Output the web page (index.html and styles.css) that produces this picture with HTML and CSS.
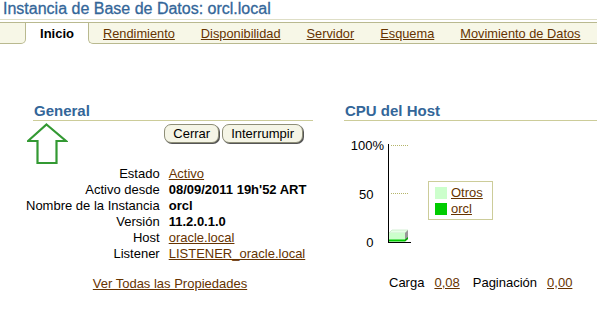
FILE: index.html
```html
<html>
  <head>
    <meta charset="utf-8">
    <title>Instancia de Base de Datos: orcl.local</title>
    <link rel="stylesheet" href="styles.css">
  </head>

  <body>

    <h1 class="page-title">Instancia de Base de Datos: orcl.local</h1>

    <div class="tabbar">
      <div class="tabrow">
        <div class="tab-start"></div>
        <div class="tab active">Inicio</div>
        <div class="tab-rest">
          <a class="tab" href="#">Rendimiento</a>
          <a class="tab" href="#">Disponibilidad</a>
          <a class="tab" href="#">Servidor</a>
          <a class="tab" href="#">Esquema</a>
          <a class="tab" href="#">Movimiento de Datos</a>
        </div>
      </div>
    </div>

    <div class="content">

      <div class="col-general">
        <h2 class="section-title">General</h2>

        <div class="buttons">
          <button class="btn">Cerrar</button>
          <button class="btn">Interrumpir</button>
        </div>

        <!-- green arrow pointing at the section title -->
        <svg class="hint-arrow" width="41" height="42" viewBox="0 0 41 42">
          <path d="M19.5 1.5 L39 18 L29.5 18 L29.5 40 L10.5 40 L10.5 18 L1 18 Z" fill="none" stroke="#339933" stroke-width="2.2"/>
        </svg>

        <div class="props">
          <span class="lbl">Estado</span><span class="val"><a href="#">Activo</a></span>
          <span class="lbl">Activo desde</span><span class="val bold">08/09/2011 19h'52 ART</span>
          <span class="lbl">Nombre de la Instancia</span><span class="val bold">orcl</span>
          <span class="lbl">Versión</span><span class="val bold">11.2.0.1.0</span>
          <span class="lbl">Host</span><span class="val"><a href="#">oracle.local</a></span>
          <span class="lbl">Listener</span><span class="val"><a href="#">LISTENER_oracle.local</a></span>
        </div>

        <div class="all-props"><a href="#">Ver Todas las Propiedades</a></div>
      </div>

      <div class="col-cpu">
        <h2 class="section-title">CPU del Host</h2>

        <div class="chart-row">
          <svg class="chart" width="76" height="115" viewBox="0 0 76 115">
            <text x="40" y="15" text-anchor="end">100%</text>
            <text x="29.5" y="63.5" text-anchor="end">50</text>
            <text x="29.5" y="112" text-anchor="end">0</text>
            <line x1="47" y1="10.5" x2="64" y2="10.5" stroke="#b5b56a" stroke-dasharray="1 1"/>
            <line x1="47" y1="58.5" x2="64" y2="58.5" stroke="#b5b56a" stroke-dasharray="1 1"/>
            <!-- bar -->
            <polygon points="45,98 48,95 64,95 61,98" fill="#e8ffe8" stroke="#b8e6b8" stroke-width="0.6"/>
            <rect x="45" y="98" width="16" height="8" fill="#ccffcc"/>
            <rect x="45" y="104.5" width="16" height="2" fill="#00cc00"/>
            <polygon points="61,98 64,95 64,104 61,106.5" fill="#999999"/>
            <polygon points="61,104.5 64,102 64,104 61,106.5" fill="#00aa00"/>
            <line x1="44.5" y1="9" x2="44.5" y2="107.5" stroke="#000"/>
            <line x1="44" y1="107.5" x2="67" y2="107.5" stroke="#000"/>
          </svg>

          <div class="legend">
            <div class="legend-item"><span class="swatch otros"></span><a href="#">Otros</a></div>
            <div class="legend-item"><span class="swatch orcl"></span><a href="#">orcl</a></div>
          </div>
        </div>

        <div class="stats">
          <span>Carga</span><a href="#">0,08</a>
          <span class="gap">Paginación</span><a href="#">0,00</a>
        </div>
      </div>

    </div>

  </body>
</html>
```

FILE: styles.css
```css
body {
  margin: 0;
  font-family: "Liberation Sans", Arial, sans-serif;
  font-size: 13px;
  color: #000;
  background: #fff;
  overflow: hidden;
}

a {
  color: #663300;
}

.page-title {
  margin: 0;
  padding-left: 3px;
  font-size: 16px;
  line-height: 18px;
  font-weight: normal;
  color: #336699;
  -webkit-text-stroke: 0.3px #336699;
}

/* tabs */

.tabbar {
  margin-top: 1px;
  border-top: 1px solid #dedec6;
  padding-top: 2px;
}

.tabrow {
  display: flex;
  height: 22px;
  white-space: nowrap;
}

.tab-start {
  width: 25px;
  background: #f7f7e7;
  border-top: 1px solid #b9b98f;
  border-bottom: 1px solid #b9b98f;
  border-right: 1px solid #b9b98f;
  border-bottom-right-radius: 5px;
}

.tab {
  padding: 0 13px;
  line-height: 21px;
}

.tab.active {
  width: 62px;
  padding: 0;
  text-align: center;
  font-weight: bold;
  background: #fff;
  border-top: 1px solid #b9b98f;
}

.tab-rest {
  flex: 1;
  display: flex;
  overflow: hidden;
  padding-left: 1px;
  background: #f7f7e7;
  border-top: 1px solid #b9b98f;
  border-bottom: 1px solid #b9b98f;
  border-left: 1px solid #b9b98f;
  border-bottom-left-radius: 5px;
}

.tab-rest .tab {
  font-size: 12.8px;
}

/* content */

.content {
  display: grid;
  grid-template-columns: 286px 253px;
  column-gap: 31px;
  padding: 58px 0 0 27px;
}

.section-title {
  margin: 0;
  padding-left: 1px;
  font-size: 15px;
  line-height: 18px;
  color: #336699;
  border-bottom: 1px solid #cccc99;
}

.col-general {
  position: relative;
}

.col-general .section-title {
  margin-left: 6px;
}

.buttons {
  display: flex;
  justify-content: flex-end;
  gap: 3px;
  padding: 3px 10px 0 0;
}

.btn {
  height: 19px;
  padding: 0 8px;
  font-family: "Liberation Sans", Arial, sans-serif;
  font-size: 13px;
  color: #000;
  background: #f5f5e6;
  border: 1px solid #8e8e78;
  border-radius: 7px;
  box-shadow: 1px 1px 0 #555;
}

.hint-arrow {
  position: absolute;
  left: 0;
  top: 21px;
}

.props {
  display: grid;
  grid-template-columns: max-content auto;
  column-gap: 9px;
  margin: 23px 0 0 -1px;
  line-height: 16px;
  white-space: nowrap;
}

.lbl {
  text-align: right;
}

.bold {
  font-weight: bold;
}

.all-props {
  margin-top: 14px;
  line-height: 16px;
  text-align: center;
}

/* cpu chart */

.chart-row {
  display: flex;
  margin-top: 14px;
}

.chart text {
  font-family: "Liberation Sans", Arial, sans-serif;
  font-size: 13px;
}

.legend {
  align-self: flex-start;
  margin: 46px 0 0 8px;
  padding: 3px 9px 2px 6px;
  border: 1px solid #cccc99;
  line-height: 16px;
}

.legend-item {
  display: flex;
  align-items: center;
  gap: 4px;
}

.swatch {
  width: 12px;
  height: 12px;
}

.swatch.otros {
  background: #ccffcc;
}

.swatch.orcl {
  background: #00cc00;
}

.stats {
  display: flex;
  margin: 25px 0 0 45px;
  line-height: 16px;
}

.stats a {
  margin-left: 10px;
}

.stats .gap {
  margin-left: 13px;
}
```
